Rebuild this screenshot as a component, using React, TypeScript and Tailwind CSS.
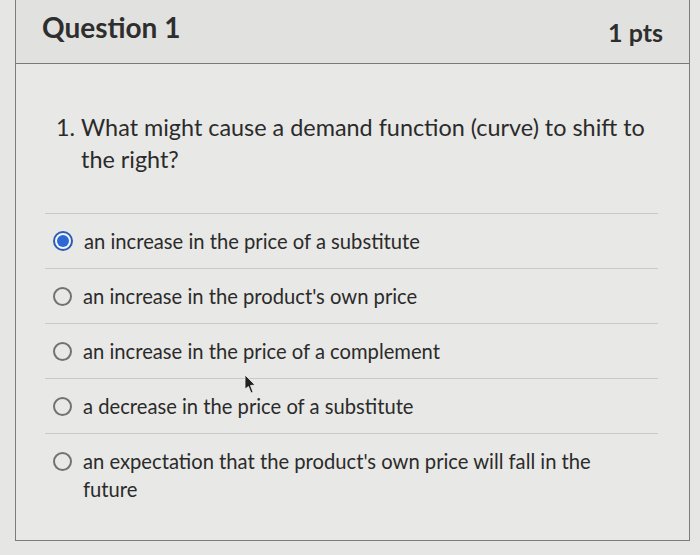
import React from "react";

const answers = [
  { text: "an increase in the price of a substitute", selected: true },
  { text: "an increase in the product's own price", selected: false },
  { text: "an increase in the price of a complement", selected: false },
  { text: "a decrease in the price of a substitute", selected: false },
  { text: "an expectation that the product's own price will fall in the future", selected: false },
];

function Radio({ selected }: { selected: boolean }) {
  if (selected) {
    return (
      <span className="mt-[4px] flex h-[20px] w-[20px] shrink-0 items-center justify-center rounded-full border-2 border-[#2a5cb8] bg-[#f4f6fa] p-[2px]">
        <span className="h-full w-full rounded-full bg-[#2d68d6]" />
      </span>
    );
  }
  return <span className="mt-[5px] block h-[19px] w-[19px] shrink-0 rounded-full border-2 border-[#727272]" />;
}

export default function App() {
  return (
    <div
      className="relative h-[555px] w-[700px] overflow-hidden bg-[#e6e6e4] pl-[15px] pr-[10px]"
      style={{ fontFamily: "Lato, 'Open Sans', sans-serif" }}
    >
      <div className="flex h-[541px] flex-col border-x border-b border-[#7c7c7c] bg-[#e8e8e6]">
        <div className="flex h-[64px] shrink-0 items-start justify-between border-b border-[#7a7a7a] bg-[#e1e1df] pl-[26px] pr-[26px] pt-[10px]">
          <span className="text-[28px] font-bold leading-[34px] text-[#2e2e2e]">Question 1</span>
          <span className="mt-[5px] text-[25px] font-bold leading-[34px] text-[#2e2e2e]">1 pts</span>
        </div>
        <div className="flex flex-col pt-[47px]">
          <div className="flex pl-[40px] pr-[30px] text-[23.4px] leading-[32px] text-[#2b2b2b]">
            <span className="w-[25px] shrink-0">1.</span>
            <span>What might cause a demand function (curve) to shift to the right?</span>
          </div>
          <div className="ml-[29px] mr-[31px] mt-[38px] flex flex-col">
            {answers.map((a, i) => (
              <div
                key={i}
                className="flex items-start gap-[11px] border-t border-[#c9c9c7] pb-[13px] pl-[8px] pt-[13px] text-[20.2px] leading-[28px] text-[#2b2b2b]"
              >
                <Radio selected={a.selected} />
                <span className="max-w-[530px]">{a.text}</span>
              </div>
            ))}
          </div>
        </div>
      </div>
      <svg className="absolute left-[243px] top-[374px]" width="14" height="20" viewBox="0 0 14 20">
        <path d="M2 1 L12 11 L7.5 11.5 L10 18 L8 19 L5.5 12.5 L2 15 Z" fill="#222" stroke="#eee" strokeWidth="0.8" />
      </svg>
    </div>
  );
}
